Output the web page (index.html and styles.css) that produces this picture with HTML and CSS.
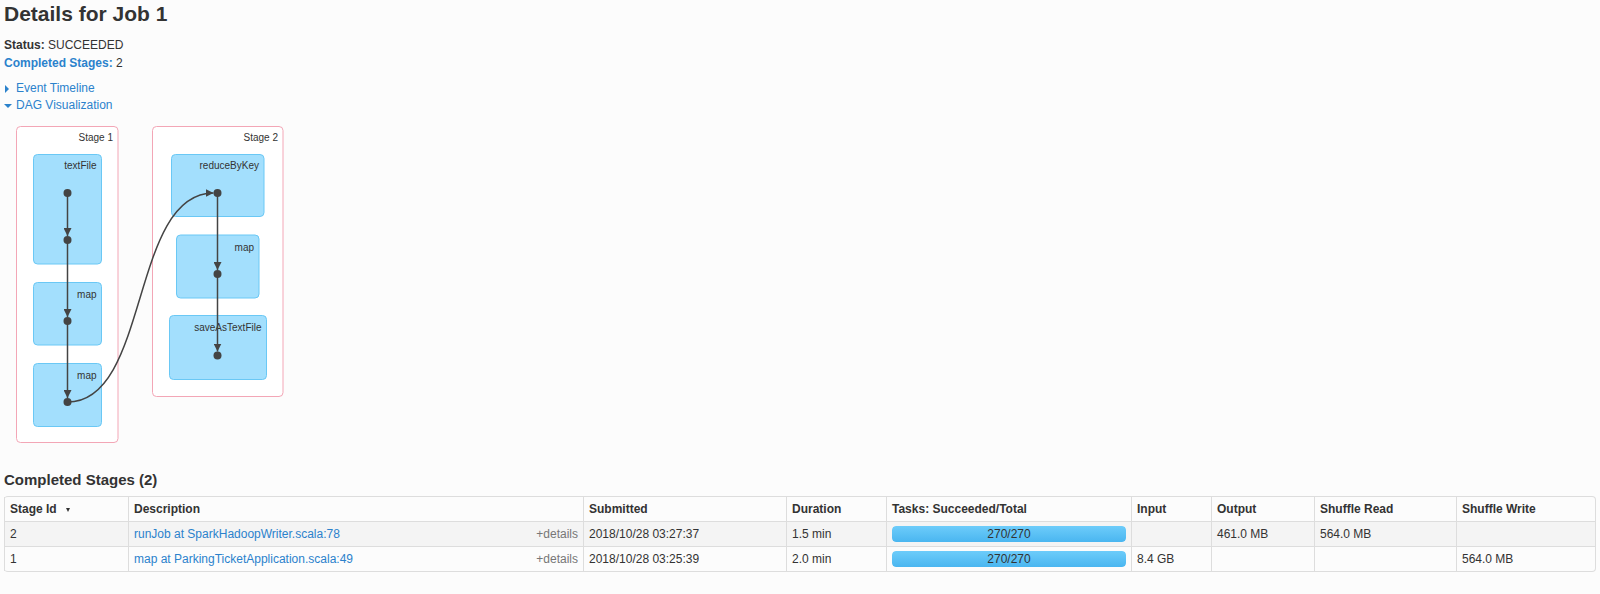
FILE: index.html
```html
<!doctype html>
<html>
<head>
  <meta charset="utf-8">
  <title>Details for Job 1</title>
  <link rel="stylesheet" href="styles.css">
</head>
<body>

  <div class="container">
    <h3 class="title">Details for Job 1</h3>

    <ul class="summary">
      <li><strong>Status:</strong> SUCCEEDED</li>
      <li><a class="link" href="#completed"><strong>Completed Stages:</strong></a> 2</li>
    </ul>

    <div class="toggles">
      <a class="toggle" href="#timeline"><span class="arrow-right"></span>Event Timeline</a>
      <a class="toggle" href="#dag"><span class="arrow-down"></span>DAG Visualization</a>
    </div>

    <div class="dag">
      <svg width="300" height="337" viewBox="0 0 300 337">
        <defs>
          <marker id="arrow" viewBox="0 0 10 10" refX="10" refY="5" markerWidth="8" markerHeight="8" markerUnits="userSpaceOnUse" orient="auto">
            <path d="M0,0 L10,5 L0,10 z" fill="#444"/>
          </marker>
        </defs>
        <g transform="translate(-4,-115)">
          <rect class="stage" x="16.5" y="127.5" width="101.5" height="316" rx="4"/>
          <text class="label" x="113" y="142">Stage 1</text>
          <rect class="stage" x="152.5" y="127.5" width="130.5" height="270" rx="4"/>
          <text class="label" x="278" y="142">Stage 2</text>

          <rect class="node" x="33.5" y="155.5" width="68" height="109.5" rx="4"/>
          <text class="label" x="96.5" y="170">textFile</text>
          <rect class="node" x="33.5" y="283.5" width="68" height="62.5" rx="4"/>
          <text class="label" x="96.5" y="299">map</text>
          <rect class="node" x="33.5" y="364.5" width="68" height="63" rx="4"/>
          <text class="label" x="96.5" y="380">map</text>

          <rect class="node" x="171.5" y="155.5" width="92.5" height="62" rx="4"/>
          <text class="label" x="259" y="170">reduceByKey</text>
          <rect class="node" x="176.5" y="236" width="82.5" height="63" rx="4"/>
          <text class="label" x="254" y="252">map</text>
          <rect class="node" x="169.5" y="316.5" width="97" height="64" rx="4"/>
          <text class="label" x="261.5" y="332">saveAsTextFile</text>

          <line class="edge" x1="67.5" y1="194" x2="67.5" y2="237" marker-end="url(#arrow)"/>
          <line class="edge" x1="67.5" y1="241" x2="67.5" y2="318" marker-end="url(#arrow)"/>
          <line class="edge" x1="67.5" y1="322" x2="67.5" y2="399" marker-end="url(#arrow)"/>
          <line class="edge" x1="217.5" y1="194" x2="217.5" y2="271" marker-end="url(#arrow)"/>
          <line class="edge" x1="217.5" y1="275" x2="217.5" y2="352.5" marker-end="url(#arrow)"/>
          <path class="edge" d="M67.5,403 C150,403 130,194 213.5,194" marker-end="url(#arrow)"/>

          <circle class="dot" cx="67.5" cy="194" r="4"/>
          <circle class="dot" cx="67.5" cy="241" r="4"/>
          <circle class="dot" cx="67.5" cy="322" r="4"/>
          <circle class="dot" cx="67.5" cy="403" r="4"/>
          <circle class="dot" cx="217.5" cy="194" r="4"/>
          <circle class="dot" cx="217.5" cy="275" r="4"/>
          <circle class="dot" cx="217.5" cy="356.5" r="4"/>
        </g>
      </svg>
    </div>

    <h4 class="section" id="completed">Completed Stages (2)</h4>

    <table class="stages">
      <colgroup>
        <col class="c-id"><col class="c-desc"><col class="c-sub"><col class="c-dur"><col class="c-tasks">
        <col class="c-in"><col class="c-out"><col class="c-read"><col class="c-write">
      </colgroup>
      <thead>
        <tr>
          <th>Stage Id <span class="sort"></span></th>
          <th>Description</th>
          <th>Submitted</th>
          <th>Duration</th>
          <th>Tasks: Succeeded/Total</th>
          <th>Input</th>
          <th>Output</th>
          <th>Shuffle Read</th>
          <th>Shuffle Write</th>
        </tr>
      </thead>
      <tbody>
        <tr>
          <td>2</td>
          <td><a class="link" href="#">runJob at SparkHadoopWriter.scala:78</a><span class="details">+details</span></td>
          <td>2018/10/28 03:27:37</td>
          <td>1.5 min</td>
          <td><div class="progress"><div class="bar" style="width: 100%">270/270</div></div></td>
          <td></td>
          <td>461.0 MB</td>
          <td>564.0 MB</td>
          <td></td>
        </tr>
        <tr>
          <td>1</td>
          <td><a class="link" href="#">map at ParkingTicketApplication.scala:49</a><span class="details">+details</span></td>
          <td>2018/10/28 03:25:39</td>
          <td>2.0 min</td>
          <td><div class="progress"><div class="bar" style="width: 100%">270/270</div></div></td>
          <td>8.4 GB</td>
          <td></td>
          <td></td>
          <td>564.0 MB</td>
        </tr>
      </tbody>
    </table>
  </div>

</body>
</html>
```

FILE: styles.css
```css
html, body {
  margin: 0;
  padding: 0;
}

body {
  background: #fcfcfc;
  color: #333;
  font-family: "Liberation Sans", Arial, sans-serif;
  font-size: 12px;
  line-height: 18px;
}

.container {
  padding: 0 4px;
}

.link {
  color: #2b82cc;
  text-decoration: none;
}

.title {
  margin: 1px 0 0 0;
  font-size: 21px;
  line-height: 26px;
  font-weight: bold;
}

.summary {
  list-style: none;
  margin: 9px 0 0 0;
  padding: 0;
}

.summary li {
  line-height: 18px;
}

.toggles {
  margin-top: 8px;
}

.toggle {
  display: flex;
  align-items: center;
  color: #2b82cc;
  text-decoration: none;
  line-height: 17px;
}

.arrow-right {
  width: 0;
  height: 0;
  border-top: 4px solid transparent;
  border-bottom: 4px solid transparent;
  border-left: 4px solid #2b82cc;
  margin: 0 7px 0 1px;
}

.arrow-down {
  width: 0;
  height: 0;
  border-left: 4px solid transparent;
  border-right: 4px solid transparent;
  border-top: 4px solid #2b82cc;
  margin: 1px 4px 0 0;
}

.dag svg {
  display: block;
}

.dag .stage {
  fill: #fff;
  stroke: #f3a6b6;
  stroke-width: 1px;
}

.dag .node {
  fill: #a3dffd;
  stroke: #6ac8f5;
  stroke-width: 1px;
}

.dag .label {
  font-family: "Liberation Sans", Arial, sans-serif;
  font-size: 10px;
  fill: #333;
  text-anchor: end;
}

.dag .edge {
  fill: none;
  stroke: #444;
  stroke-width: 1.5px;
}

.dag .dot {
  fill: #444;
}

.section {
  margin: 20px 0 0 0;
  font-size: 15px;
  line-height: 18px;
  font-weight: bold;
}

.stages {
  width: 100%;
  margin-top: 7px;
  table-layout: fixed;
  border-collapse: separate;
  border-spacing: 0;
  border: 1px solid #ddd;
  border-left: 0;
  border-radius: 4px;
}

.stages .c-id { width: 124px; }
.stages .c-desc { width: 455px; }
.stages .c-sub { width: 203px; }
.stages .c-dur { width: 100px; }
.stages .c-tasks { width: 245px; }
.stages .c-in { width: 80px; }
.stages .c-out { width: 103px; }
.stages .c-read { width: 142px; }

.stages th,
.stages td {
  padding: 4px 5px;
  line-height: 16px;
  text-align: left;
  border-left: 1px solid #ddd;
  border-top: 1px solid #ddd;
  white-space: nowrap;
  overflow: hidden;
}

.stages thead th {
  border-top: 0;
  font-weight: bold;
}

.stages tbody tr:nth-child(odd) td {
  background: #f4f4f4;
}

.sort {
  display: inline-block;
  width: 0;
  height: 0;
  border-left: 2.5px solid transparent;
  border-right: 2.5px solid transparent;
  border-top: 4px solid #333;
  margin-left: 6px;
  vertical-align: middle;
}

.details {
  float: right;
  color: #777;
}

.progress {
  height: 16px;
  background: #f5f5f5;
  border-radius: 4px;
  overflow: hidden;
}

.bar {
  height: 16px;
  line-height: 16px;
  text-align: center;
  color: #333;
  background: linear-gradient(to bottom, #6dccfa, #4ab6f0);
  border-radius: 4px;
}
```
